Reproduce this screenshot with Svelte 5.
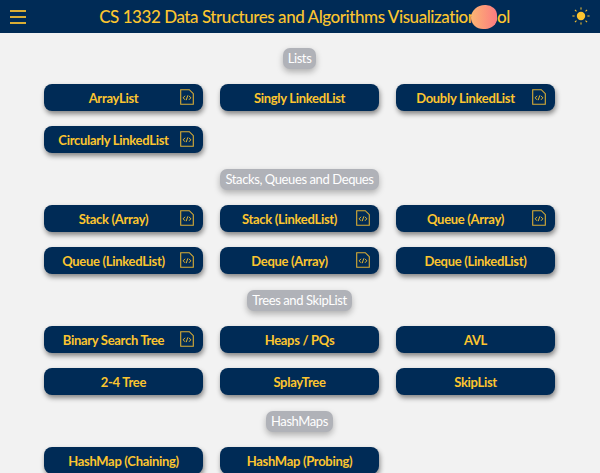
<script>
  const sections = [
    { title: 'Lists', items: [['ArrayList', 1], ['Singly LinkedList', 0], ['Doubly LinkedList', 1], ['Circularly LinkedList', 1]] },
    { title: 'Stacks, Queues and Deques', items: [['Stack (Array)', 1], ['Stack (LinkedList)', 1], ['Queue (Array)', 1], ['Queue (LinkedList)', 1], ['Deque (Array)', 1], ['Deque (LinkedList)', 0]] },
    { title: 'Trees and SkipList', items: [['Binary Search Tree', 1], ['Heaps / PQs', 0], ['AVL', 0], ['2-4 Tree', 0], ['SplayTree', 0], ['SkipList', 0]] },
    { title: 'HashMaps', items: [['HashMap (Chaining)', 0], ['HashMap (Probing)', 0]] }
  ];
  const rays = [0, 45, 90, 135, 180, 225, 270, 315];
</script>

<div class="page">
  <header>
    <button class="menu" aria-label="menu"><span></span><span></span><span></span></button>
    <h1>CS 1332 Data Structures and Algorithms Visualization Tool</h1>
    <svg class="sun" viewBox="0 0 18 18" width="18" height="18">
      <circle cx="9" cy="9" r="4.2" fill="#fcc52f" />
      {#each rays as r}
        <line x1="9" y1="2.6" x2="9" y2="0.4" stroke="#fcc52f" stroke-width="1" transform="rotate({r} 9 9)" />
      {/each}
    </svg>
    <div class="blob"></div>
  </header>
  <main>
    {#each sections as s}
      <div class="label">{s.title}</div>
      <div class="grid">
        {#each s.items as [name, code]}
          <div class="card" class:with-icon={code}>
            <span>{name}</span>
            {#if code}
              <svg class="file" viewBox="0 0 14 16" width="14" height="16">
                <path d="M.7.7H9.3L13.3 4.7V15.3H.7V.7Z" fill="none" stroke="#d9ad35" stroke-width="1.1" />
                <path d="M5 6.8 3.2 8.8 5 10.8M9 6.8l1.8 2L9 10.8M7.8 6.4 6.2 11.2" fill="none" stroke="#fcc52f" stroke-width=".9" />
              </svg>
            {/if}
          </div>
        {/each}
      </div>
    {/each}
  </main>
</div>

<style>
  :global(body) {
    background: #f2f2f2;
    overflow: hidden;
  }
  .page {
    height: 473px;
    overflow: hidden;
    font-family: Lato, "Open Sans", sans-serif;
  }
  header {
    position: relative;
    height: 33px;
    padding-left: 9px;
    background: #002b56;
    display: flex;
    align-items: center;
    justify-content: center;
  }
  h1 {
    margin: 0 0 1px;
    color: #fcc52f;
    font-size: 17px;
    font-weight: 500;
    letter-spacing: -0.45px;
    white-space: nowrap;
  }
  .menu {
    position: absolute;
    left: 10px;
    top: 10px;
    width: 16px;
    padding: 0;
    border: 0;
    background: none;
    display: flex;
    flex-direction: column;
    gap: 4px;
  }
  .menu span {
    height: 2px;
    background: #d9ad35;
  }
  .sun {
    position: absolute;
    left: 572px;
    top: 7px;
  }
  .blob {
    position: absolute;
    left: 471px;
    top: 5px;
    width: 26px;
    height: 24px;
    border-radius: 60% 48% 50% 52%;
    background: linear-gradient(90deg, #fcb573, #fb7b80);
  }
  main {
    display: flex;
    flex-direction: column;
    align-items: center;
    padding: 15px 1px 0 0;
  }
  .label {
    height: 21px;
    line-height: 20px;
    padding: 0 5px;
    margin-bottom: 15px;
    border-radius: 7px;
    background: #b0b2b8;
    color: #fff;
    font-size: 13px;
    letter-spacing: -0.4px;
    box-shadow: 0 3px 6px rgba(0, 0, 0, 0.28);
  }
  .grid {
    display: grid;
    grid-template-columns: repeat(3, 159px);
    grid-auto-rows: 27px;
    gap: 15px 17px;
    margin-bottom: 16px;
  }
  .card {
    position: relative;
    display: flex;
    align-items: center;
    justify-content: center;
    border-radius: 8px;
    background: #002b56;
    color: #fcc52f;
    font-size: 13px;
    font-weight: 700;
    letter-spacing: -0.3px;
    box-shadow: 1px 3px 5px rgba(0, 0, 0, 0.45);
  }
  .with-icon {
    padding-right: 20px;
  }
  .file {
    position: absolute;
    right: 9px;
    top: 5px;
  }
</style>
